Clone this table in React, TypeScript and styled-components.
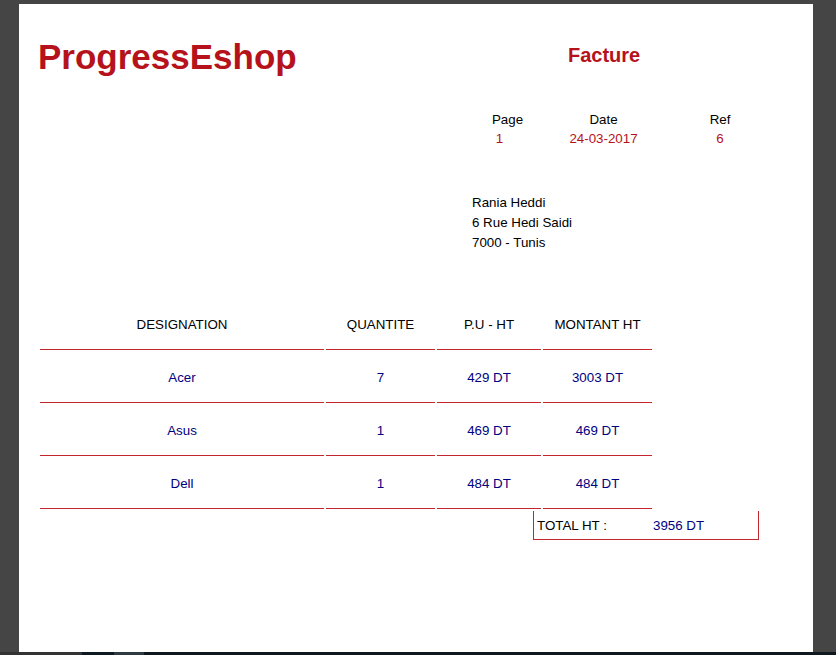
import React from "react";
import styled, { createGlobalStyle } from "styled-components";

const RED = "#b5121b";
const LINE = "#c4262e";
const NAVY = "#000080";

const GlobalStyle = createGlobalStyle`
  html, body {
    margin: 0;
    padding: 0;
    background: #454545;
  }
  body {
    font-family: "Liberation Sans", Arial, sans-serif;
    overflow: hidden;
  }
`;

const Screen = styled.div`
  width: 836px;
  height: 655px;
  padding: 4px 0 0 19px;
  box-sizing: border-box;
  display: flex;
  flex-direction: column;
`;

const Sheet = styled.div`
  width: 794px;
  height: 648px;
  background: #ffffff;
  box-sizing: border-box;
  padding: 33px 0 0 19px;
  display: flex;
  flex-direction: column;
  align-items: flex-start;
`;

const Strip = styled.div`
  margin-left: -19px;
  height: 3px;
  width: 836px;
  display: flex;
`;

const StripPart = styled.div<{ $w: number; $c: string }>`
  width: ${(p) => p.$w}px;
  flex: ${(p) => (p.$w === 0 ? 1 : "none")};
  background: ${(p) => p.$c};
`;

const Header = styled.div`
  display: grid;
  grid-template-columns: 530px auto;
  align-items: start;
`;

const Brand = styled.h1`
  margin: 0;
  font-size: 35px;
  line-height: 40px;
  font-weight: 700;
  color: ${RED};
`;

const DocTitle = styled.h2`
  margin: 6px 0 0;
  font-size: 20px;
  line-height: 24px;
  font-weight: 700;
  color: ${RED};
`;

const InfoGrid = styled.div`
  margin: 33px 0 0 432px;
  display: grid;
  grid-template-columns: 75px 117px 116px;
  font-size: 13.33px;
  line-height: 19px;
`;

const InfoLabel = styled.div`
  text-align: center;
  color: #000;
`;

const InfoValue = styled.div<{ $shift?: number }>`
  text-align: center;
  color: ${RED};
  padding-right: ${(p) => (p.$shift ? p.$shift * 2 : 0)}px;
`;

const Address = styled.div`
  margin: 45px 0 0 434px;
  font-size: 13.33px;
  line-height: 20px;
  color: #000;
`;

const Table = styled.div`
  margin-top: 44px;
  display: grid;
  grid-template-columns: 284px 109px 104px 109px;
  gap: 2px;
  padding: 2px;
`;

const Cell = styled.div<{ $head?: boolean }>`
  height: 50px;
  border-bottom: 1px solid ${LINE};
  display: flex;
  align-items: center;
  justify-content: center;
  font-size: 13.33px;
  color: ${(p) => (p.$head ? "#000" : NAVY)};
`;

const TotalBox = styled.div`
  margin-left: 495px;
  width: 221px;
  height: 28px;
  padding-left: 3px;
  border: 1px solid ${LINE};
  border-top: none;
  display: flex;
  align-items: center;
  font-size: 13.33px;
`;

const TotalLabel = styled.span`
  width: 116px;
  color: #000;
`;

const TotalValue = styled.span`
  color: ${NAVY};
`;

const rows = [
  { name: "Acer", qty: 7, pu: 429, total: 3003 },
  { name: "Asus", qty: 1, pu: 469, total: 469 },
  { name: "Dell", qty: 1, pu: 484, total: 484 },
];

export default function App() {
  const sum = rows.reduce((s, r) => s + r.total, 0);
  return (
    <>
      <GlobalStyle />
      <Screen>
        <Sheet>
          <Header>
            <Brand>ProgressEshop</Brand>
            <DocTitle>Facture</DocTitle>
          </Header>
          <InfoGrid>
            <InfoLabel>Page</InfoLabel>
            <InfoLabel>Date</InfoLabel>
            <InfoLabel>Ref</InfoLabel>
            <InfoValue $shift={8}>1</InfoValue>
            <InfoValue>24-03-2017</InfoValue>
            <InfoValue>6</InfoValue>
          </InfoGrid>
          <Address>
            <div>Rania Heddi</div>
            <div>6 Rue Hedi Saidi</div>
            <div>7000 - Tunis</div>
          </Address>
          <Table>
            <Cell $head>DESIGNATION</Cell>
            <Cell $head>QUANTITE</Cell>
            <Cell $head>P.U - HT</Cell>
            <Cell $head>MONTANT HT</Cell>
            {rows.map((r) => (
              <React.Fragment key={r.name}>
                <Cell>{r.name}</Cell>
                <Cell>{r.qty}</Cell>
                <Cell>{r.pu} DT</Cell>
                <Cell>{r.total} DT</Cell>
              </React.Fragment>
            ))}
          </Table>
          <TotalBox>
            <TotalLabel>TOTAL HT :</TotalLabel>
            <TotalValue>{sum} DT</TotalValue>
          </TotalBox>
        </Sheet>
        <Strip>
          <StripPart $w={82} $c="#333333" />
          <StripPart $w={32} $c="#0d1a1f" />
          <StripPart $w={30} $c="#2f3a40" />
          <StripPart $w={0} $c="#0f181c" />
        </Strip>
      </Screen>
    </>
  );
}
